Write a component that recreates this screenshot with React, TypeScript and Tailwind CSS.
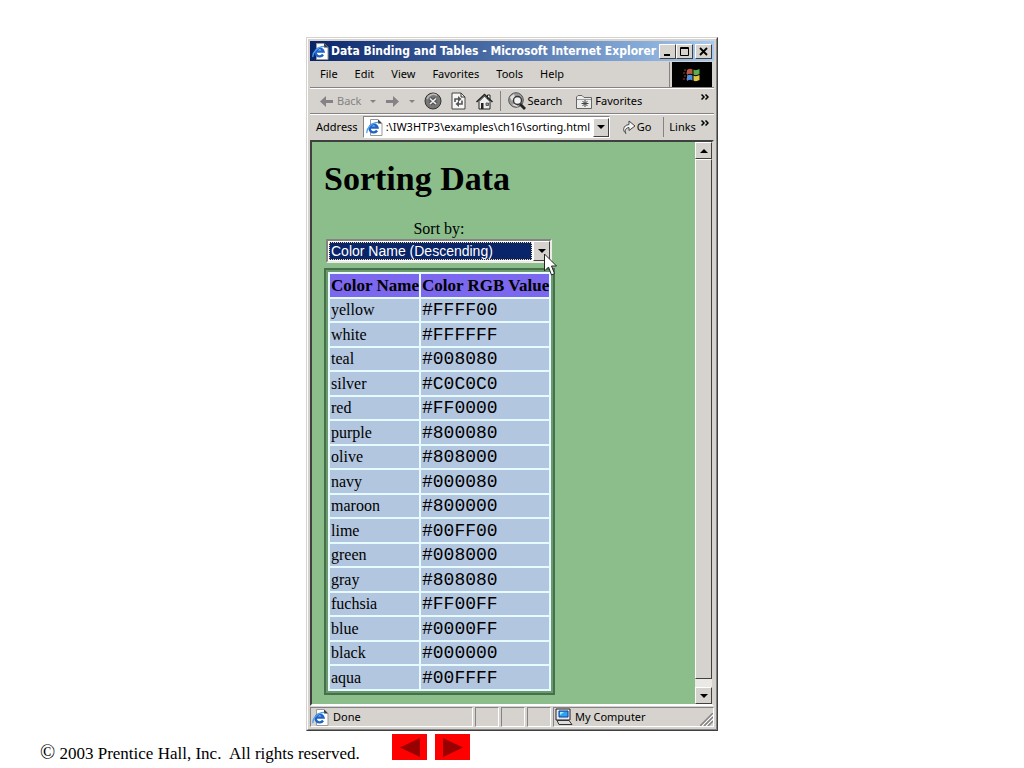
import { useState } from "react";
import type { ReactNode } from "react";

const colors = [
  { name: "yellow", rgb: "#FFFF00" },
  { name: "white", rgb: "#FFFFFF" },
  { name: "teal", rgb: "#008080" },
  { name: "silver", rgb: "#C0C0C0" },
  { name: "red", rgb: "#FF0000" },
  { name: "purple", rgb: "#800080" },
  { name: "olive", rgb: "#808000" },
  { name: "navy", rgb: "#000080" },
  { name: "maroon", rgb: "#800000" },
  { name: "lime", rgb: "#00FF00" },
  { name: "green", rgb: "#008000" },
  { name: "gray", rgb: "#808080" },
  { name: "fuchsia", rgb: "#FF00FF" },
  { name: "blue", rgb: "#0000FF" },
  { name: "black", rgb: "#000000" },
  { name: "aqua", rgb: "#00FFFF" },
];

const sortOptions = [
  { value: "-name", label: "Color Name (Descending)" },
  { value: "+name", label: "Color Name (Ascending)" },
  { value: "-rgb", label: "Color RGB Value (Descending)" },
  { value: "+rgb", label: "Color RGB Value (Ascending)" },
];

const menus = ["File", "Edit", "View", "Favorites", "Tools", "Help"];

const raised = "border border-t-white border-l-white border-r-[#404040] border-b-[#404040] bg-[#d6d3ce]";
const sunken = "border border-t-[#848284] border-l-[#848284] border-r-white border-b-white";

const PageIcon = () => (
  <svg width="18" height="17" viewBox="0 0 18 17" className="shrink-0">
    <path d="M4.500 .5H12L16 4.500V16.500H4.500z" fill="#fff" stroke="#999" />
    <path d="M12 .5v4h4z" fill="#333" />
    <path d="M11 11.500A4 4 0 1 1 11.500 8.500H4.500" fill="none" stroke="#1f62c8" strokeWidth="2.400" />
    <path d="M1 14C0 10 6 3 12.500 3.500" fill="none" stroke="#4aa0ee" strokeWidth="1.300" />
  </svg>
);

const Arrow = ({ dir }: { dir: "up" | "down" }) => (
  <svg width="8" height="4" viewBox="0 0 8 4" className="shrink-0">
    <path d={dir === "up" ? "M0 4L4 0L8 4z" : "M0 0H8L4 4z"} fill="#000" />
  </svg>
);

const Chevrons = () => (
  <svg width="8" height="6" viewBox="0 0 8 6" fill="none" stroke="#000" strokeWidth="1.500">
    <path d="M.5 .5L3 3L.5 5.500M4.500 .5L7 3L4.500 5.500" />
  </svg>
);

const GrayArrow = ({ left }: { left?: boolean }) => (
  <svg width="14" height="11" viewBox="0 0 14 11" className="shrink-0">
    <path
      d={left ? "M0 5.500L6 0V4H13V7H6V11z" : "M14 5.500L8 0V4H1V7H8V11z"}
      fill="#848284"
    />
  </svg>
);

const ToolCaret = () => (
  <svg width="6" height="3" viewBox="0 0 6 3" className="shrink-0">
    <path d="M0 0H6L3 3z" fill="#848284" />
  </svg>
);

const StopIcon = () => (
  <svg width="18" height="18" viewBox="0 0 18 18">
    <circle cx="9" cy="9" r="8" fill="#777" stroke="#333" />
    <path d="M3 7A6.500 6.500 0 0 1 13 3.500" fill="none" stroke="#bbb" strokeWidth="1.500" />
    <path d="M6 6.500L12 12M12 6.500L6 12" stroke="#555" strokeWidth="4" />
    <path d="M6 6.500L12 12M12 6.500L6 12" stroke="#eee" strokeWidth="1.600" />
  </svg>
);

const RefreshIcon = () => (
  <svg width="15" height="18" viewBox="0 0 15 18">
    <path d="M1 1H10L14 5V17H1z" fill="#f7f7f7" stroke="#444" />
    <path d="M10 1v4h4" fill="none" stroke="#333" />
    <path d="M4 10V7H8M11 8.500V12H7" fill="none" stroke="#555" strokeWidth="1.600" />
    <path d="M7 4L10.500 7L7 10zM8 9L4.500 12L8 15z" fill="#555" />
  </svg>
);

const HomeIcon = () => (
  <svg width="17" height="17" viewBox="0 0 17 17">
    <path d="M11.500 2H14V7H11.500z" fill="#fff" stroke="#222" />
    <path d="M3 8.500L8.500 3L14 8.500V16H3z" fill="#eee" stroke="#222" />
    <path d="M.5 9L8.500 1.500L16.500 9" fill="none" stroke="#222" strokeWidth="1.500" />
    <path d="M5 10H7.500V16H5z" fill="#222" />
    <path d="M10 10H12.500V12.500H10z" fill="#999" stroke="#333" strokeWidth=".7" />
  </svg>
);

const SearchIcon = () => (
  <svg width="18" height="18" viewBox="0 0 18 18">
    <circle cx="8" cy="8" r="7.300" fill="#9a9a9a" stroke="#555" />
    <path d="M2 5L6 2L7 5L4 9zM4 13L8 11L10 15z" fill="#e2e2e2" />
    <path d="M12 12L17 17" stroke="#222" strokeWidth="2.800" />
    <circle cx="9.500" cy="8.500" r="4" fill="#f3f3f3" stroke="#333" strokeWidth="1.400" />
  </svg>
);

const FavoritesIcon = () => (
  <svg width="17" height="15" viewBox="0 0 17 15">
    <path d="M.5 14.500V3L2 1.500H6L8 3.500H15.500V14.500z" fill="#ececec" stroke="#666" />
    <path d="M1 5.500H15" stroke="#999" />
    <path d="M9 6V13M5.500 9.500H12.500M6.500 7L11.500 12M11.500 7L6.500 12" stroke="#444" />
  </svg>
);

const GoIcon = () => (
  <svg width="14" height="14" viewBox="0 0 14 14">
    <path
      d="M4 13.500C.5 11 .5 5.500 7 4.500V1L13 6L7 10.500V7.500C3.500 8 2.500 10.500 4 13.500z"
      fill="#f5f5f5"
      stroke="#444"
    />
  </svg>
);

const WindowsLogo = () => (
  <svg width="18" height="16" viewBox="0 0 18 16">
    <path d="M1 3H4M0 6H4M1 9H4M0 12H4" stroke="#a33c2a" strokeDasharray="2 1" />
    <path d="M4 3Q7 1 9.500 2.500V7.500Q7 6 4 8z" fill="#b9583c" />
    <path d="M4 8.500Q7 7 9.500 8.500V13.500Q7 12 4 14z" fill="#4c8fe0" />
    <path d="M10.500 2.500Q13 4 16.500 2V7Q13 9 10.500 7.500z" fill="#5fae4e" />
    <path d="M10.500 8.500Q13 10 16.500 8V13Q13 15 10.500 13.500z" fill="#e3c640" />
  </svg>
);

const ComputerIcon = () => (
  <svg width="18" height="18" viewBox="0 0 18 18" className="shrink-0">
    <path d="M1 1H15V12H1z" fill="#e8e8f0" stroke="#222" />
    <path d="M4 3H13V9H4z" fill="#29a5f5" stroke="#113a90" />
    <path d="M5 4H9L5 7z" fill="#a8e9ff" />
    <path d="M2 12.500H14L17 16.500H4z" fill="#ddd" stroke="#333" />
  </svg>
);

const WindowButton = ({ label, children }: { label: string; children: ReactNode }) => (
  <button type="button" aria-label={label} className={`flex h-[15px] w-[17px] shrink-0 items-center justify-center ${raised}`}>
    <svg width="11" height="11" viewBox="0 0 11 11" fill="none" stroke="#000">
      {children}
    </svg>
  </button>
);

const Separator = () => <div className="h-5 w-px shrink-0 bg-[#848284]" />;

const App = () => {
  const [sort, setSort] = useState("-name");

  const key = sort.slice(1) as "name" | "rgb";
  const rows = [...colors].sort((a, b) =>
    sort[0] === "+" ? a[key].localeCompare(b[key]) : b[key].localeCompare(a[key])
  );

  return (
    <div className="min-h-screen bg-white pt-[37px] text-black">
      {/* browser window */}
      <div className="mx-auto w-full max-w-[412px] border border-t-[#d6d3ce] border-l-[#d6d3ce] border-r-[#404040] border-b-[#404040] font-['Noto_Sans',sans-serif] text-[11px] leading-4">
        <div className="border border-t-white border-l-white border-r-[#848284] border-b-[#848284] bg-[#d6d3ce] p-[2px]">
          {/* title bar */}
          <div className="flex h-5 items-center bg-gradient-to-r from-[#0a246a] to-[#a6caf0] pr-[2px] pl-[2px]">
            <PageIcon />
            <span className="ml-px min-w-0 flex-1 font-['DejaVu_Sans_Condensed','DejaVu_Sans',sans-serif] text-[12px] font-bold whitespace-nowrap text-white">
              Data Binding and Tables - Microsoft Internet Explorer
            </span>
            <WindowButton label="Minimize">
              <path d="M2 9H8" strokeWidth="2" />
            </WindowButton>
            <WindowButton label="Maximize">
              <path d="M1.500 1.500H9.500V9.500H1.500zM1.500 2.500H9.500" />
            </WindowButton>
            <div className="w-[2px]" />
            <WindowButton label="Close">
              <path d="M2 2L9 9M9 2L2 9" strokeWidth="1.800" />
            </WindowButton>
          </div>

          {/* menu bar */}
          <div className="mt-px flex h-[26px] items-stretch border-b border-[#848284] pr-[2px]">
            <nav className="mr-[2px] flex flex-1 items-center gap-[17px] border-r border-[#848284] pb-px pl-[10px]">
              {menus.map((m) => (
                <button key={m} type="button">{m}</button>
              ))}
            </nav>
            <div className="flex w-10 items-center justify-center bg-black">
              <WindowsLogo />
            </div>
          </div>

          {/* toolbar */}
          <div className="flex h-[26px] items-center border-t border-b border-t-white border-b-[#848284] pl-[10px]">
            <button type="button" disabled className="flex items-center gap-[3px] text-[#848284]">
              <GrayArrow left />
              Back
            </button>
            <div className="ml-[9px]"><ToolCaret /></div>
            <button type="button" aria-label="Forward" disabled className="ml-[9px]"><GrayArrow /></button>
            <div className="ml-[10px]"><ToolCaret /></div>
            <button type="button" aria-label="Stop" className="ml-[9px]"><StopIcon /></button>
            <button type="button" aria-label="Refresh" className="ml-[9px]"><RefreshIcon /></button>
            <button type="button" aria-label="Home" className="mr-[7px] ml-[10px]"><HomeIcon /></button>
            <Separator />
            <button type="button" className="ml-[7px] flex items-center gap-px">
              <SearchIcon />
              Search
            </button>
            <button type="button" className="ml-[14px] flex items-center gap-[2px]">
              <FavoritesIcon />
              Favorites
            </button>
            <button type="button" aria-label="More tools" className="mr-[5px] ml-auto pb-2"><Chevrons /></button>
          </div>

          {/* address bar */}
          <div className="flex h-[26px] items-center border-t border-white pb-px pl-[6px]">
            <label htmlFor="address">Address</label>
            <div className={`ml-[5px] flex h-[22px] w-[247px] items-center bg-white pl-[2px] ${sunken}`}>
              <PageIcon />
              <input
                id="address"
                type="text"
                defaultValue=":\IW3HTP3\examples\ch16\sorting.html"
                className="ml-[2px] min-w-0 flex-1 bg-transparent text-[11px] outline-none"
              />
              <button type="button" aria-label="Address history" className={`flex h-[19px] w-4 items-center justify-center ${raised}`}>
                <Arrow dir="down" />
              </button>
            </div>
            <button type="button" className="mr-3 ml-3 flex items-center gap-px">
              <GoIcon />
              Go
            </button>
            <Separator />
            <a href="#links" className="ml-[5px]">Links</a>
            <button type="button" aria-label="More links" className="mr-[5px] ml-auto pb-2"><Chevrons /></button>
          </div>

          {/* document */}
          <div className="flex border-2 border-t-[#404040] border-r-[#d6d3ce] border-b-white border-l-[#404040]">
            <main className="flex-1 bg-[#8bbe8b] px-3 pb-[9px] font-['Liberation_Serif',serif]">
              <h1 className="pt-[17px] text-[34px] leading-10 font-bold">Sorting Data</h1>
              <div className="mt-5 ml-[2px] w-[226px]">
                <label htmlFor="sort" className="block text-center text-[16px] leading-5">Sort by:</label>
                <div className="relative border-2 border-t-[#848284] border-r-[#efebe7] border-b-[#efebe7] border-l-[#848284] bg-white p-px">
                  <select
                    id="sort"
                    value={sort}
                    onChange={(e) => setSort(e.target.value)}
                    className="block h-[18px] w-[203px] appearance-none border border-dotted border-[#f5db95] bg-[#0a246a] pl-px font-['Liberation_Sans',sans-serif] text-[14px] leading-4 text-white outline-none"
                  >
                    {sortOptions.map((o) => (
                      <option key={o.value} value={o.value}>{o.label}</option>
                    ))}
                  </select>
                  <span className={`pointer-events-none absolute top-0 right-0 bottom-0 flex w-[17px] items-center justify-center ${raised}`}>
                    <Arrow dir="down" />
                  </span>
                  {/* mouse pointer */}
                  <svg width="13" height="24" viewBox="0 0 13 24" className="pointer-events-none absolute top-3 -right-[7px]">
                    <path d="M.5 1V18L4.500 14L7.500 22L10.500 20.500L7.500 13H12.500z" fill="#fff" stroke="#222" />
                  </svg>
                </div>
              </div>

              <div className="mt-[5px] w-fit border-2 border-[#46704a]">
                <table className="w-[227px] border-separate border-spacing-[2px] border-2 border-[#6b9a6e] bg-[#e6fbff] text-[16px] leading-5">
                  <thead>
                    <tr className="h-[23px] bg-[#7b68ee] text-left text-[17px]">
                      <th className="w-[88px] py-0 pr-0 pl-px whitespace-nowrap">Color Name</th>
                      <th className="py-0 pr-0 pl-px whitespace-nowrap">Color RGB Value</th>
                    </tr>
                  </thead>
                  <tbody>
                    {rows.map((c) => (
                      <tr key={c.name} className="bg-[#b3c6df] odd:h-[22px] even:h-[23px]">
                        <td className="px-px py-0">{c.name}</td>
                        <td className="px-px py-0 font-['Liberation_Mono',monospace] text-[18px]">{c.rgb}</td>
                      </tr>
                    ))}
                  </tbody>
                </table>
              </div>
            </main>

            {/* scrollbar */}
            <div className="flex w-[17px] flex-col bg-[#ebe9e6]">
              <button type="button" aria-label="Scroll up" className={`flex h-[17px] items-center justify-center ${raised}`}>
                <Arrow dir="up" />
              </button>
              <div className={`mb-2 flex-1 ${raised}`} />
              <button type="button" aria-label="Scroll down" className={`flex h-[17px] items-center justify-center ${raised}`}>
                <Arrow dir="down" />
              </button>
            </div>
          </div>

          {/* status bar */}
          <div className="mt-px flex h-5 gap-[2px]">
            <div className={`flex w-[163px] items-center gap-[3px] pl-px ${sunken}`}>
              <PageIcon />
              Done
            </div>
            <div className={`w-6 ${sunken}`} />
            <div className={`w-6 ${sunken}`} />
            <div className={`w-6 ${sunken}`} />
            <div className={`flex flex-1 items-center gap-[2px] pl-px ${sunken}`}>
              <ComputerIcon />
              My Computer
              <svg width="13" height="13" viewBox="0 0 13 13" className="mt-auto ml-auto">
                <path d="M0 13L13 0M4 13L13 4M8 13L13 8" stroke="#848284" strokeWidth="1.500" />
                <path d="M2 13L13 2M6 13L13 6" stroke="#fff" />
              </svg>
            </div>
          </div>
        </div>
      </div>

      {/* slide footer */}
      <footer className="flex pt-[3px] pl-10 font-['Liberation_Serif',serif]">
        <p className="w-[352px] pt-2 text-[17px] leading-5 whitespace-pre">
          <span className="text-[20px]">©</span> 2003 Prentice Hall, Inc.  All rights reserved.
        </p>
        <div className="flex gap-2">
          <button type="button" aria-label="Previous slide" className="flex h-[26px] w-[35px] items-center justify-center bg-[#ff0000]">
            <svg width="20" height="19" viewBox="0 0 20 19"><path d="M0 9.500L20 0V19z" fill="#990000" /></svg>
          </button>
          <button type="button" aria-label="Next slide" className="flex h-[26px] w-[35px] items-center justify-center bg-[#ff0000]">
            <svg width="20" height="19" viewBox="0 0 20 19"><path d="M20 9.500L0 0V19z" fill="#990000" /></svg>
          </button>
        </div>
      </footer>
    </div>
  );
};

export default App;
